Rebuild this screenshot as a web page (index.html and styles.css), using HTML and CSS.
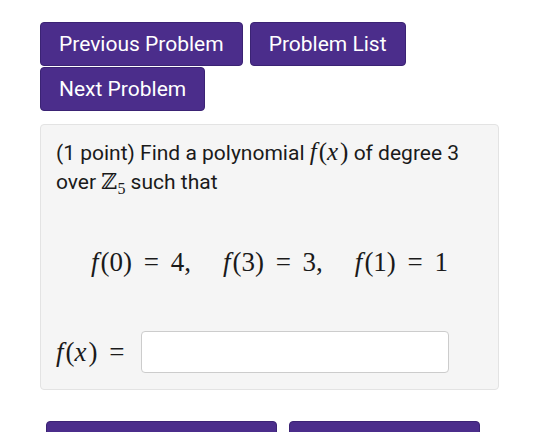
FILE: index.html
```html
<!DOCTYPE html>
<html>
<head>
<meta charset="utf-8">
<link rel="stylesheet" href="styles.css">
</head>
<body>
<div class="page">
  <nav class="nav">
    <button class="btn">Previous Problem</button>
    <button class="btn">Problem List</button>
    <button class="btn">Next Problem</button>
  </nav>
  <div class="problem">
    <p class="statement">(1 point) Find a polynomial <span class="m"><i class="v">f</i>(<i class="v">x</i>)</span> of degree 3 over <span class="m zz">ℤ<sub>5</sub></span> such that</p>
    <div class="display m">
      <span class="term"><i class="v">f</i>(0) <span class="rel">=</span> 4,</span>
      <span class="term"><i class="v">f</i>(3) <span class="rel">=</span> 3,</span>
      <span class="term"><i class="v">f</i>(1) <span class="rel">=</span> 1</span>
    </div>
    <div class="answer">
      <span class="m label"><i class="v">f</i>(<i class="v">x</i>) <span class="rel">=</span></span>
      <input class="field" type="text">
    </div>
  </div>
  <div class="actions">
    <button class="btn low wide1">Preview My Answers</button>
    <button class="btn low wide2">Submit Answers</button>
  </div>
</div>
</body>
</html>
```

FILE: styles.css
```css
html, body {
  margin: 0;
  padding: 0;
  background: #ffffff;
}
body {
  font-family: Roboto, "Liberation Sans", Arial, sans-serif;
  color: #222222;
}
.page {
  padding: 22px 41px 0 40px;
}
.nav {
  display: flex;
  flex-wrap: wrap;
  column-gap: 7px;
  row-gap: 1px;
}
.btn {
  font-family: Roboto, "Liberation Sans", Arial, sans-serif;
  font-size: 21px;
  line-height: 24px;
  padding: 9px 18px;
  color: #ffffff;
  background: #4b2d8b;
  border: 1px solid #3b2374;
  border-radius: 4px;
  margin: 0;
}
.low {
  padding-top: 16px;
}
.problem {
  margin-top: 13px;
  background: #f5f5f5;
  border: 1px solid #e3e3e3;
  border-radius: 4px;
  padding: 14px 15px 16px;
  font-size: 21px;
  line-height: 29px;
  color: #1a1a1a;
}
.statement {
  margin: 0;
}
.m {
  font-family: "Liberation Serif", "Times New Roman", serif;
  font-size: 25px;
  line-height: 1;
}
.v {
  font-family: "Liberation Serif", "Times New Roman", serif;
  font-style: italic;
  padding-right: 2px;
}
.zz {
  font-family: "DejaVu Serif", serif;
  font-size: 22px;
}
.zz sub {
  font-family: "Liberation Serif", serif;
  font-size: 16px;
  line-height: 0;
}
.display {
  display: flex;
  justify-content: center;
  gap: 32px;
  font-size: 27px;
  margin: 48px 0 52px;
  line-height: 34px;
}
.rel {
  margin: 0 5px;
}
.answer {
  display: flex;
  align-items: center;
  gap: 12px;
}
.label {
  font-size: 27px;
  line-height: 30px;
}
.field {
  width: 308px;
  height: 42px;
  box-sizing: border-box;
  border: 1px solid #cccccc;
  border-radius: 4px;
  background: #ffffff;
  margin: 0;
  padding: 4px 8px;
  font-size: 18px;
}
.actions {
  display: flex;
  gap: 12px;
  margin-top: 31px;
  padding-left: 6px;
}
.wide1 {
  width: 231px;
}
.wide2 {
  width: 191px;
}
```
